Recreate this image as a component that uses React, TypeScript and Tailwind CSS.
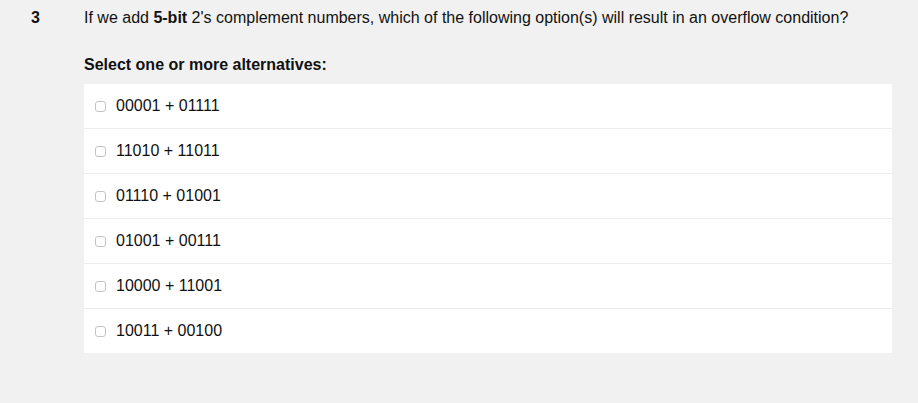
const options = [
  '00001 + 01111',
  '11010 + 11011',
  '01110 + 01001',
  '01001 + 00111',
  '10000 + 11001',
  '10011 + 00100',
];

export default function App() {
  return (
    <div
      className="w-[918px] h-[403px] bg-[#f1f1f1] text-[#111] flex pt-[8px]"
      style={{ fontFamily: '"Liberation Sans", Arial, sans-serif' }}
    >
      <div className="w-[84px] pl-[31px] text-[16px] font-bold leading-[20px]">3</div>
      <div className="w-[808px]">
        <p className="text-[16px] leading-[20px]">
          If we add <b>5-bit</b> 2's complement numbers, which of the following option(s) will result in an overflow condition?
        </p>
        <p className="mt-[27px] text-[16px] font-bold leading-[20px]">Select one or more alternatives:</p>
        <div className="mt-[9px] bg-white">
          {options.map((o, i) => (
            <label
              key={o}
              className={`flex items-center pl-[11px] gap-[10px] text-[16px] ${
                i > 0 ? 'h-[45px] border-t border-[#ececec]' : 'h-[44px]'
              }`}
            >
              <span className="w-[11px] h-[11px] rounded-[3px] border border-[#c4c4c4] bg-white" />
              <span>{o}</span>
            </label>
          ))}
        </div>
      </div>
    </div>
  );
}
